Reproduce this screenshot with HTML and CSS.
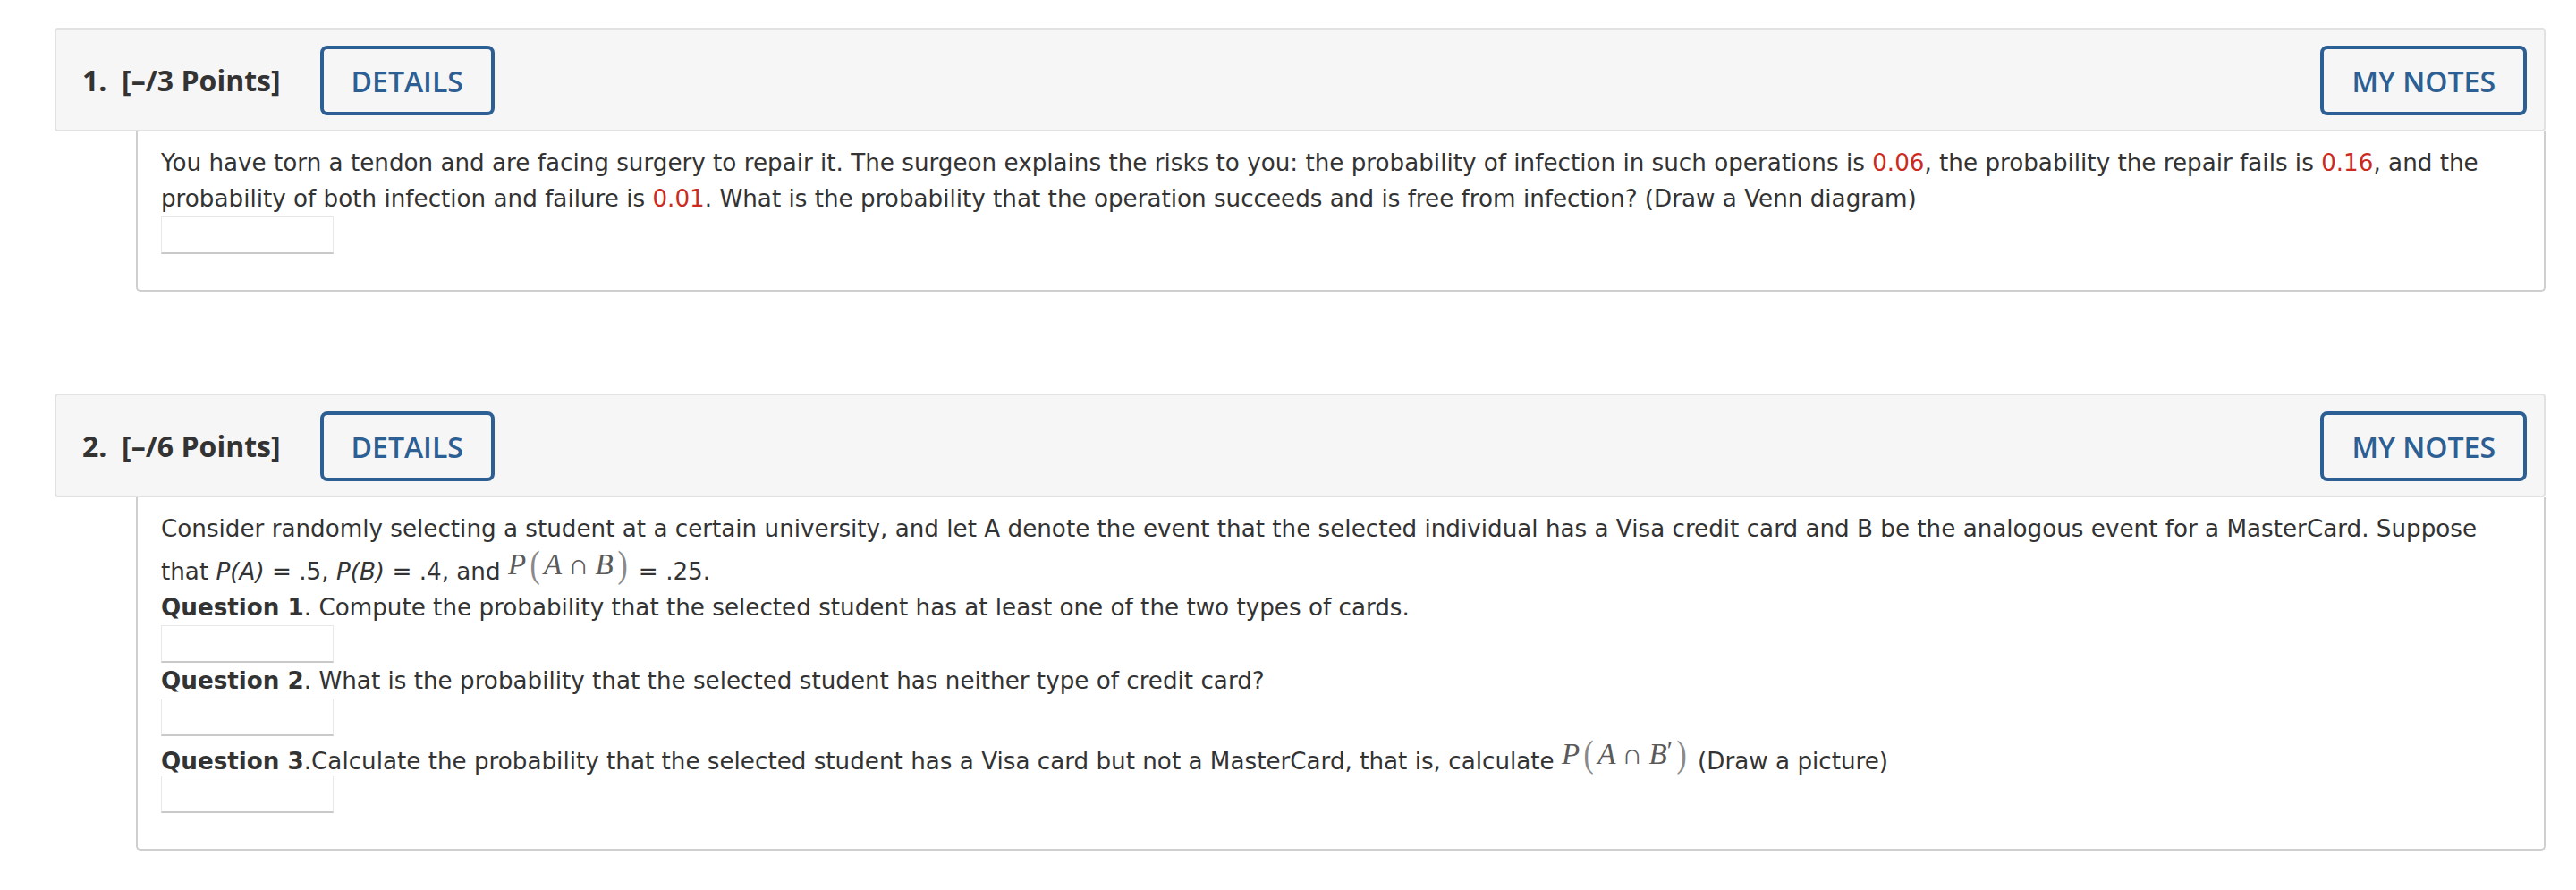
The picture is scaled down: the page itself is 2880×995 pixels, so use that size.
FILE: index.html
```html
<!DOCTYPE html>
<html lang="en">
<head>
<meta charset="utf-8">
<title>Questions</title>
<link rel="stylesheet" href="styles.css">
</head>
<body>
<div class="page">
  <section class="question">
    <div class="qhead">
      <span class="qnum">1.&nbsp; [–/3 Points]</span>
      <span class="btn">DETAILS</span>
      <span class="btn btn-notes">MY NOTES</span>
    </div>
    <div class="qbody">
      <p class="text">You have torn a tendon and are facing surgery to repair it. The surgeon explains the risks to you: the probability of infection in such operations is <span class="red">0.06</span>, the probability the repair fails is <span class="red">0.16</span>, and the probability of both infection and failure is <span class="red">0.01</span>. What is the probability that the operation succeeds and is free from infection? (Draw a Venn diagram)</p>
      <span class="answer"></span>
    </div>
  </section>

  <section class="question">
    <div class="qhead">
      <span class="qnum">2.&nbsp; [–/6 Points]</span>
      <span class="btn">DETAILS</span>
      <span class="btn btn-notes">MY NOTES</span>
    </div>
    <div class="qbody">
      <p class="text">Consider randomly selecting a student at a certain university, and let A denote the event that the selected individual has a Visa credit card and B be the analogous event for a MasterCard. Suppose that <i>P(A)</i> = .5, <i>P(B)</i> = .4, and <span class="math"><span class="mi">P</span><span class="paren">(</span><span class="mi">A</span><span class="cap">∩</span><span class="mi">B</span><span class="paren">)</span></span> = .25.</p>
      <p class="text"><b>Question 1</b>. Compute the probability that the selected student has at least one of the two types of cards.</p>
      <span class="answer"></span>
      <p class="text"><b>Question 2</b>. What is the probability that the selected student has neither type of credit card?</p>
      <span class="answer"></span>
      <p class="text"><b>Question 3</b>.Calculate the probability that the selected student has a Visa card but not a MasterCard, that is, calculate <span class="math"><span class="mi">P</span><span class="paren">(</span><span class="mi">A</span><span class="cap">∩</span><span class="mi">B</span><span class="prime">′</span><span class="paren">)</span></span> (Draw a picture)</p>
      <span class="answer last"></span>
    </div>
  </section>
</div>
</body>
</html>
```
FILE: styles.css
```css
html, body {
  margin: 0;
  background: #ffffff;
}

body {
  font-family: "DejaVu Sans", Verdana, sans-serif;
  color: #333333;
}

.page {
  padding: 31px 34px 0 61px;
}

.question + .question {
  margin-top: 114px;
}

.qhead {
  display: flex;
  align-items: center;
  box-sizing: border-box;
  height: 116px;
  background: #f6f6f6;
  border: 2px solid #e2e2e2;
  border-radius: 4px;
  padding: 0 19px 0 29px;
}

.qnum {
  font-family: "Open Sans", sans-serif;
  font-weight: 700;
  font-size: 32px;
  color: #333333;
  white-space: pre;
}

.btn {
  display: flex;
  align-items: center;
  box-sizing: border-box;
  height: 78px;
  margin-left: 44px;
  margin-top: 2px;
  padding: 0 31px;
  border: 4px solid #2c5f93;
  border-radius: 8px;
  font-family: "Open Sans", sans-serif;
  font-weight: 600;
  font-size: 32px;
  color: #2c5f93;
}

.btn-notes {
  margin-left: auto;
}

.qbody {
  margin-left: 91px;
  border: 2px solid #cfcfcf;
  border-top: 0;
  border-radius: 0 0 5px 5px;
  padding: 15px 40px 40px 26px;
  font-size: 26.2px;
  line-height: 40px;
}

.text {
  margin: 0;
}

.text b {
  font-weight: 700;
}

.red {
  color: #cc2a1e;
}

.answer {
  display: block;
  box-sizing: border-box;
  width: 193px;
  height: 42px;
  background: #ffffff;
  border: 1px solid #e8e8e8;
  border-bottom: 2px solid #c9c9c9;
}

.answer.last {
  margin-top: -4px;
}

.math {
  display: inline-block;
  height: 40px;
  font-family: "Liberation Serif", "Times New Roman", serif;
  font-size: 33px;
  line-height: 40px;
  color: #5a5a5a;
  vertical-align: 6px;
  white-space: nowrap;
}

.math .mi {
  font-style: italic;
}

.math .paren {
  display: inline-block;
  font-size: 42px;
  line-height: 40px;
  color: #8a8a8a;
  transform: scaleX(0.8);
  margin: 0 3px;
  vertical-align: -3px;
}

.math .cap {
  margin: 0 7px;
  font-size: 32px;
}

.math .prime {
  display: inline-block;
  font-size: 28px;
  line-height: 20px;
  vertical-align: 6px;
}
```
